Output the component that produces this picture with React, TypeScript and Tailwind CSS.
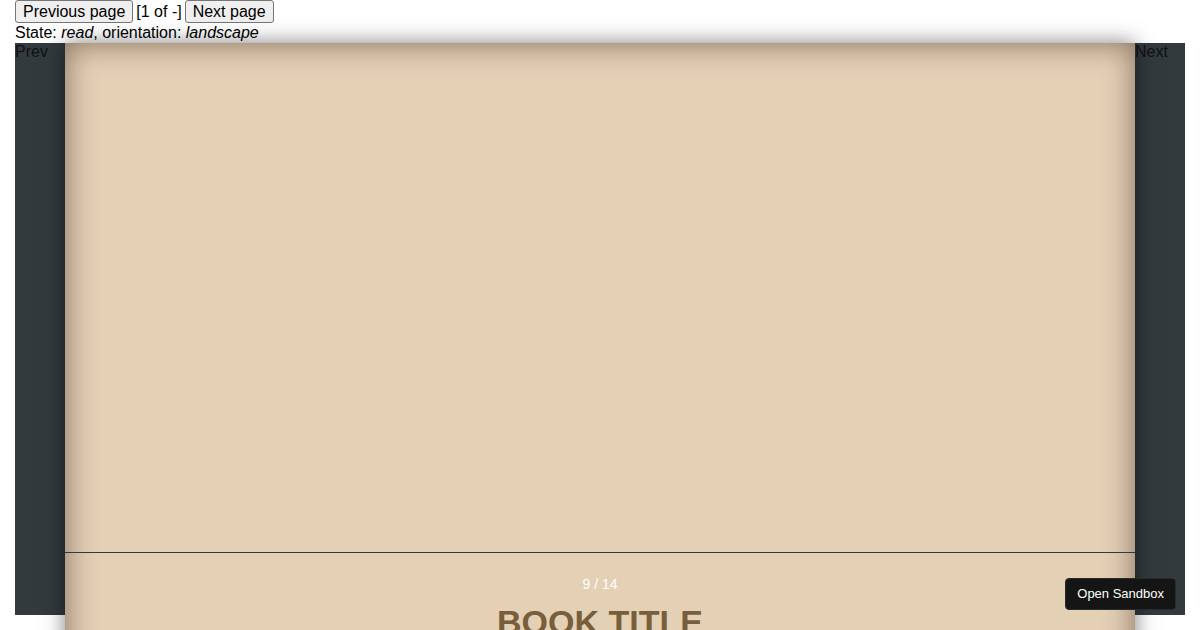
import React from "react";

const pageShadow =
  "shadow-[inset_0_0_30px_0_rgba(36,10,3,0.5),0_0_20px_0_rgba(0,0,0,0.5)]";

function Controls() {
  return (
    <div className="text-base text-black">
      <div className="flex h-[23px] items-center gap-[3px]">
        <button className="h-[23px] rounded-[3px] border border-[#767676] bg-[#efefef] px-[7px] leading-[19px]">
          Previous page
        </button>
        <span>[1 of -]</span>
        <button className="h-[23px] rounded-[3px] border border-[#767676] bg-[#efefef] px-[7px] leading-[19px]">
          Next page
        </button>
      </div>
      <div className="h-[20px] leading-[20px]">
        State: <i>read</i>, orientation: <i>landscape</i>
      </div>
    </div>
  );
}

function Book() {
  return (
    <div className="flex h-[572px] items-start bg-[#323a3d]">
      <div className="w-[50px] shrink-0 text-base leading-[18px] text-[#111]">Prev</div>
      <div className={`relative z-10 h-[700px] w-[1070px] shrink-0 bg-[#e3d0b5] ${pageShadow}`}>
        <div className="h-[509px]" />
        <div className="border-t border-[#2f3a40]" />
        <div className="pt-[23px] text-center text-sm leading-[16px] text-white">9 / 14</div>
        <h2 className="pt-[10px] text-center text-[34px] font-bold leading-[40px] text-[#785e3a]">
          BOOK TITLE
        </h2>
      </div>
      <div className="w-[50px] shrink-0 text-base leading-[18px] text-[#111]">Next</div>
    </div>
  );
}

export default function App() {
  return (
    <div className="h-[630px] overflow-hidden bg-white px-[15px] font-['Liberation_Sans',Arial,sans-serif]">
      <Controls />
      <Book />
      <button className="fixed bottom-[20px] right-[24px] z-20 h-[32px] rounded-[4px] border border-[#2a2a2a] bg-[#151515] px-[11px] text-[13px] text-white">
        Open Sandbox
      </button>
    </div>
  );
}
